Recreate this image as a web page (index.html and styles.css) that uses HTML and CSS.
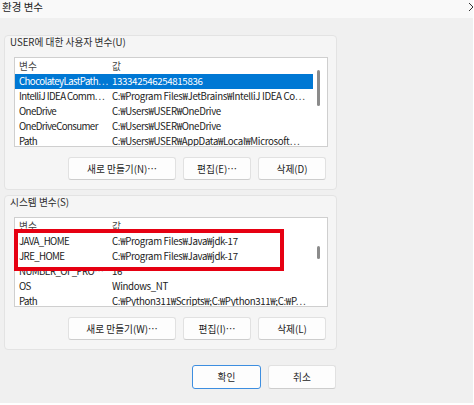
FILE: index.html
```html
<!DOCTYPE html>
<html>
<head>
  <title>환경 변수</title>
  <meta charset="UTF-8">
  <link rel="stylesheet" href="styles.css">
</head>
<body>
<div class="dialog">
  <div class="titlebar">
    <span class="title">환경 변수</span>
    <svg class="close" viewBox="0 0 10 10" width="10" height="10">
      <path d="M1 1 L9 9 M9 1 L1 9" stroke="#333" stroke-width="1" fill="none"/>
    </svg>
  </div>

  <div class="column">
    <!-- 사용자 변수 -->
    <section class="group user">
      <div class="group-label">USER에 대한 사용자 변수(U)</div>
      <div class="list">
        <div class="rows">
          <div class="row head"><span class="name">변수</span><span class="value">값</span></div>
          <div class="row selected"><span class="name">ChocolateyLastPath…</span><span class="value">133342546254815836</span></div>
          <div class="row"><span class="name">IntelliJ IDEA Comm…</span><span class="value">C:₩Program Files₩JetBrains₩IntelliJ IDEA Co…</span></div>
          <div class="row"><span class="name">OneDrive</span><span class="value">C:₩Users₩USER₩OneDrive</span></div>
          <div class="row"><span class="name">OneDriveConsumer</span><span class="value">C:₩Users₩USER₩OneDrive</span></div>
          <div class="row"><span class="name">Path</span><span class="value">C:₩Users₩USER₩AppData₩Local₩Microsoft…</span></div>
        </div>
        <div class="scrollbar"><div class="thumb"></div></div>
      </div>
      <div class="buttons">
        <button class="btn wide">새로 만들기(N)…</button>
        <button class="btn">편집(E)…</button>
        <button class="btn">삭제(D)</button>
      </div>
    </section>

    <!-- 시스템 변수 -->
    <section class="group system">
      <div class="group-label">시스템 변수(S)</div>
      <div class="list">
        <div class="rows">
          <div class="row head"><span class="name">변수</span><span class="value">값</span></div>
          <div class="row"><span class="name">JAVA_HOME</span><span class="value">C:₩Program Files₩Java₩jdk-17</span></div>
          <div class="row"><span class="name">JRE_HOME</span><span class="value">C:₩Program Files₩Java₩jdk-17</span></div>
          <div class="row"><span class="name">NUMBER_OF_PROC…</span><span class="value">16</span></div>
          <div class="row"><span class="name">OS</span><span class="value">Windows_NT</span></div>
          <div class="row"><span class="name">Path</span><span class="value">C:₩Python311₩Scripts₩;C:₩Python311₩;C:₩P…</span></div>
        </div>
        <div class="scrollbar"><div class="thumb"></div></div>
        <div class="highlight"></div>
      </div>
      <div class="buttons">
        <button class="btn wide">새로 만들기(W)…</button>
        <button class="btn">편집(I)…</button>
        <button class="btn">삭제(L)</button>
      </div>
    </section>

    <div class="dialog-buttons">
      <button class="btn default">확인</button>
      <button class="btn">취소</button>
    </div>
  </div>
</div>
</body>
</html>
```

FILE: styles.css
```css
body {
  margin: 0;
  background: #fff;
  font-family: "Noto Sans CJK KR", "Noto Sans", sans-serif;
  font-size: 9.7px;
  color: #1b1b1b;
}

.dialog {
  width: 473px;
  height: 403px;
  background: #f0f0f0;
  overflow: hidden;
}

.titlebar {
  height: 18px;
  background: #f9f9f9;
  display: flex;
  justify-content: space-between;
  align-items: flex-start;
}

.title {
  font-size: 10.5px;
  line-height: 14px;
  padding-left: 2px;
}

.close {
  margin-top: 2px;
  margin-right: -5px;
}

.column {
  width: 333px;
  margin-left: 4px;
  padding-top: 17px;
}

.group {
  background: #f5f5f5;
  border: 1px solid #e3e3e3;
  border-radius: 4px;
  padding: 0 8px 9px 9px;
}

.group + .group {
  margin-top: 5px;
}

.group-label {
  line-height: 12px;
  margin: 0 0 9px -4px;
  color: #2a2a2a;
}

.list {
  position: relative;
  display: flex;
  height: 90px;
  box-sizing: border-box;
  border: 1px solid #cfcfcf;
  background: #fff;
}

.rows {
  flex: 1;
  min-width: 0;
  overflow: hidden;
}

.row {
  display: flex;
  height: 15px;
  line-height: 15px;
  white-space: nowrap;
  letter-spacing: -0.35px;
}

.row.head {
  height: 16px;
  line-height: 16px;
  color: #444;
  letter-spacing: 0;
}

.row.selected {
  background: #0078d4;
  color: #fff;
}

.name {
  width: 94px;
  flex: none;
  padding-left: 4px;
  box-sizing: border-box;
  overflow: hidden;
  text-overflow: ellipsis;
  letter-spacing: -0.6px;
}

.head .name {
  letter-spacing: 0;
}

.value {
  flex: 1;
  min-width: 0;
  padding-left: 3px;
  overflow: hidden;
  text-overflow: ellipsis;
}

.scrollbar {
  width: 14px;
  flex: none;
}

.thumb {
  width: 3px;
  margin-left: 4px;
  background: #8b8b8b;
  border-radius: 2px;
}

.user .thumb {
  margin-top: 12px;
  height: 36px;
}

.system .thumb {
  margin-top: 28px;
  height: 13px;
}

/* 빨간 강조 표시 */
.highlight {
  position: absolute;
  left: -1px;
  top: 11px;
  width: 270px;
  height: 42px;
  box-sizing: border-box;
  border: 4px solid #e60012;
}

.buttons {
  display: flex;
  justify-content: flex-end;
  gap: 7px;
  margin-top: 10px;
  padding-right: 2px;
}

.btn {
  width: 68px;
  height: 23px;
  padding: 0;
  box-sizing: border-box;
  background: #fdfdfd;
  border: 1px solid #e1e1e1;
  border-bottom-color: #cdcdcd;
  border-radius: 3px;
  font: inherit;
  color: inherit;
}

.btn.wide {
  width: 108px;
}

.dialog-buttons {
  display: flex;
  justify-content: flex-end;
  gap: 7px;
  margin-top: 15px;
  padding-right: 1px;
}

.dialog-buttons .btn {
  height: 24px;
}

.btn.default {
  width: 69px;
  border-color: #3d8ee0;
}
```
